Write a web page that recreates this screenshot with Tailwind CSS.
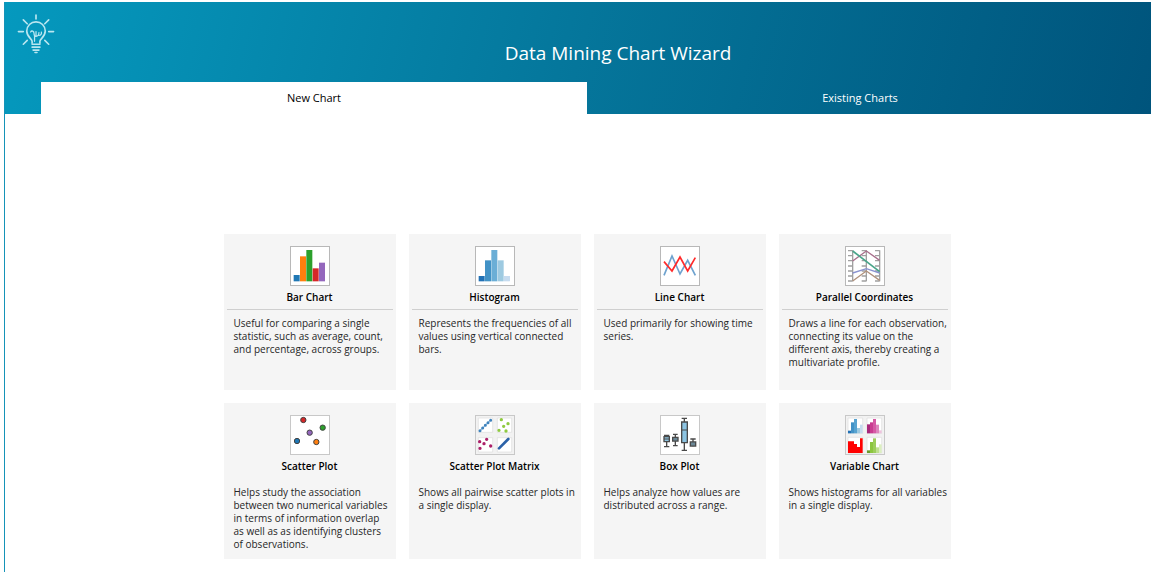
<!DOCTYPE html>
<html lang="en">

<head>
    <meta charset="UTF-8">
    <meta name="viewport" content="width=device-width, initial-scale=1.0">
    <title>Data Mining Chart Wizard</title>
    <script src="https://cdn.jsdelivr.net/npm/@tailwindcss/browser@4"></script>
</head>

<body class="min-h-screen flex flex-col bg-white pt-0.5 pl-1 pb-1 font-['Open_Sans',sans-serif] text-black">
    <div class="flex-1 border-l border-[#1593b8]">
        <header class="relative bg-linear-105 from-[#0599be] via-[#05769b] to-[#00547c]">
            <svg class="absolute left-[11px] top-3 size-10" viewBox="-2 0 38 41" fill="none" stroke="#b9e6f0" stroke-width="1.7" stroke-linecap="round" aria-hidden="true">
                <path d="M17 1v4M4 6l4 4M30 6l-4 4M-1 18h5M30 18h5M4 31l4-4M30 31l-4-4" />
                <path d="M13 30v-2c0-2.500-5.500-4.500-5.500-10.500a9.500 9.500 0 0 1 19 0c0 6-5.500 8-5.500 10.500v2" />
                <path d="M11.500 18.500c1-2 3.500-1 3.500 1.500 0 2 1 3 2 3s3-1 3-4M15.500 28v-5M17 18v4M20 22c2 0 3-2 2.500-3.500" stroke-width="1.300" />
                <path d="M13 31h8M13 34h8M14 37h6M16 39.500h2" />
            </svg>
            <h1 class="h-20 pt-[35px] pl-20 text-center text-[19px] leading-8 text-white">Data Mining Chart Wizard</h1>
            <nav class="grid grid-cols-2 pl-9 pr-[18px] text-[11px]" role="tablist">
                <button type="button" role="tab" aria-selected="true" class="h-8 bg-white text-black">New Chart</button>
                <button type="button" role="tab" aria-selected="false" class="h-8 text-white">Existing Charts</button>
            </nav>
        </header>

        <main class="pt-[120px] pb-3 pl-9 pr-[18px]">
            <div class="mx-auto grid max-w-[727px] grid-cols-4 gap-[13px]">
                <button type="button" class="flex min-h-[156px] flex-col items-stretch justify-start bg-[#f5f5f5] px-[3px] pt-3 text-left text-[10px] leading-[13px]">
                    <svg class="mx-auto size-10 border border-[#b8b8b8] bg-white" viewBox="2 2 114 114" aria-hidden="true">
                        <path fill="#1f77b4" d="M10 86h18v19H10z" />
                        <path fill="#ff7f0e" d="M29 30h18v75H29z" />
                        <path fill="#2ca02c" d="M48 11h18v94H48z" />
                        <path fill="#d62728" d="M67 66h18v39H67z" />
                        <path fill="#9467bd" d="M86 49h18v56H86z" />
                    </svg>
                    <span class="mt-[5px] border-b border-[#cfcfcf] pb-[5px] text-center font-semibold">Bar Chart</span>
                    <span class="pl-[7px] pt-[7px] text-[#262626]">Useful for comparing a single statistic, such as average, count, and percentage, across groups.</span>
                </button>

                <button type="button" class="flex min-h-[156px] flex-col items-stretch justify-start bg-[#f5f5f5] px-[3px] pt-3 text-left text-[10px] leading-[13px]">
                    <svg class="mx-auto size-10 border border-[#b8b8b8] bg-white" viewBox="2 2 114 114" aria-hidden="true">
                        <path fill="#2171b5" d="M10 89h18v16H10z" />
                        <path fill="#4292c6" d="M29 42h18v63H29z" />
                        <path fill="#6baed6" d="M48 11h18v94H48z" />
                        <path fill="#9ecae1" d="M67 42h18v63H67z" />
                        <path fill="#c6dbef" d="M86 89h18v16H86z" />
                    </svg>
                    <span class="mt-[5px] border-b border-[#cfcfcf] pb-[5px] text-center font-semibold">Histogram</span>
                    <span class="pl-[7px] pt-[7px] text-[#262626]">Represents the frequencies of all values using vertical connected bars.</span>
                </button>

                <button type="button" class="flex min-h-[156px] flex-col items-stretch justify-start bg-[#f5f5f5] px-[3px] pt-3 text-left text-[10px] leading-[13px]">
                    <svg class="mx-auto size-10 border border-[#b8b8b8] bg-white" viewBox="2 2 114 114" fill="none" stroke-width="5" aria-hidden="true">
                        <path stroke="#6fa3cf" d="M11 87 35 29l24 54 23-41 23 45" />
                        <path stroke="#ff2a2a" d="M11 46 35 74l24-42 23 42 23-40" />
                    </svg>
                    <span class="mt-[5px] border-b border-[#cfcfcf] pb-[5px] text-center font-semibold">Line Chart</span>
                    <span class="pl-[7px] pt-[7px] text-[#262626]">Used primarily for showing time series.</span>
                </button>

                <button type="button" class="flex min-h-[156px] flex-col items-stretch justify-start bg-[#f5f5f5] px-[3px] pt-3 text-left text-[10px] leading-[13px]">
                    <svg class="mx-auto size-10 border border-[#b8b8b8] bg-white" viewBox="2 2 114 114" fill="none" stroke-width="4" aria-hidden="true">
                        <path stroke="#a0a0a0" stroke-width="4" d="M22 12v93M63 12v93M103 12v93M8 13h14M8 28h14M8 43h14M8 59h14M8 74h14M8 89h14M8 104h14M49 13h14M49 28h14M49 43h14M49 59h14M49 74h14M49 89h14M49 104h14M89 13h14M89 28h14M89 43h14M89 59h14M89 74h14M89 89h14M89 104h14" />
                        <path stroke="#a8708c" d="M22 44 63 14l40 28" />
                        <path stroke="#4aa58a" stroke-width="5" d="m22 14 81 62" />
                        <path stroke="#8a93cf" d="m22 80 41-13 40 13" />
                        <path stroke="#b0917c" d="m22 104 41-30 40 28" />
                    </svg>
                    <span class="mt-[5px] border-b border-[#cfcfcf] pb-[5px] text-center font-semibold">Parallel Coordinates</span>
                    <span class="pl-[7px] pt-[7px] text-[#262626]">Draws a line for each observation, connecting its value on the different axis, thereby creating a multivariate profile.</span>
                </button>

                <button type="button" class="flex min-h-[156px] flex-col items-stretch justify-start bg-[#f5f5f5] px-[3px] pt-3 text-left text-[10px] leading-[13px]">
                    <svg class="mx-auto size-10 border border-[#c8c8c8] bg-white" viewBox="2 2 114 114" stroke="#444" stroke-width="3" aria-hidden="true">
                        <circle cx="39" cy="14" r="8" fill="#d62728" />
                        <circle cx="97" cy="37" r="8" fill="#2ca02c" />
                        <circle cx="58" cy="52" r="8" fill="#9467bd" />
                        <circle cx="20" cy="77" r="8" fill="#1f77b4" />
                        <circle cx="78" cy="80" r="8" fill="#ff7f0e" />
                    </svg>
                    <span class="mt-[5px] border-b border-transparent pb-[5px] text-center font-semibold">Scatter Plot</span>
                    <span class="pl-[7px] pt-[7px] text-[#262626]">Helps study the association between two numerical variables in terms of information overlap<br>as well as as identifying clusters<br>of observations.</span>
                </button>

                <button type="button" class="flex min-h-[156px] flex-col items-stretch justify-start bg-[#f5f5f5] px-[3px] pt-3 text-left text-[10px] leading-[13px]">
                    <svg class="mx-auto size-10 border border-[#c8c8c8] bg-[#f2f2f2]" viewBox="2 2 114 114" aria-hidden="true">
                        <path fill="#fff" stroke="#ddd" stroke-width="2" d="M9 8h43v43H9zM66 8h43v43H66zM9 67h43v43H9zM66 67h43v43H66z" />
                        <path fill="none" stroke="#a5c6e2" stroke-width="4" d="m14 46 31-31" />
                        <path fill="none" stroke="#3f83bd" stroke-width="9" stroke-linecap="round" d="M14 46h0M22 38h0M30 30h0M38 22h0M46 15h0" />
                        <path fill="none" stroke="#8fca3f" stroke-width="10" stroke-linecap="round" d="M78 13h0M98 25h0M85 33h0M71 45h0M92 47h0" />
                        <path fill="none" stroke="#ab1f68" stroke-width="10" stroke-linecap="round" d="M34 72h0M13 79h0M26 85h0M46 92h0M14 99h0" />
                        <path fill="none" stroke="#2b62a8" stroke-width="8" stroke-linecap="round" d="m71 99 28-28" />
                    </svg>
                    <span class="mt-[5px] border-b border-transparent pb-[5px] text-center font-semibold">Scatter Plot Matrix</span>
                    <span class="pl-[7px] pt-[7px] text-[#262626]">Shows all pairwise scatter plots in a single display.</span>
                </button>

                <button type="button" class="flex min-h-[156px] flex-col items-stretch justify-start bg-[#f5f5f5] px-[3px] pt-3 text-left text-[10px] leading-[13px]">
                    <svg class="mx-auto size-10 border border-[#c8c8c8] bg-white" viewBox="2 2 114 114" fill="#8cc4e2" stroke="#4a4a4a" stroke-width="4" aria-hidden="true">
                        <path d="M19 60v34M11 60h16M11 94h16M45 57v34M38 57h14M38 91h14M72 9v96M64 9h16M64 105h16M98 71v22M90 71h16" />
                        <path d="M11 64h16v15H11zM37 66h16v11H37zM64 20h17v62H64zM90 80h16v12H90z" />
                        <path d="M11 71h16M37 71h16M64 44h17M90 86h16" stroke-width="3" />
                    </svg>
                    <span class="mt-[5px] border-b border-transparent pb-[5px] text-center font-semibold">Box Plot</span>
                    <span class="pl-[7px] pt-[7px] text-[#262626]">Helps analyze how values are distributed across a range.</span>
                </button>

                <button type="button" class="flex min-h-[156px] flex-col items-stretch justify-start bg-[#f5f5f5] px-[3px] pt-3 text-left text-[10px] leading-[13px]">
                    <svg class="mx-auto size-10 border border-[#c8c8c8] bg-[#f2f2f2]" viewBox="2 2 114 114" aria-hidden="true">
                        <path fill="#fff" stroke="#ddd" stroke-width="2" d="M8 8h44v46H8zM65 8h44v46H65zM8 66h44v47H8zM65 66h44v47H65z" />
                        <path fill="#2171b5" d="M8 46h9v8H8z" />
                        <path fill="#4292c6" d="M17 21h9v33h-9z" />
                        <path fill="#58a3d0" d="M26 11h9v43h-9z" />
                        <path fill="#9ecae1" d="M35 38h9v16h-9z" />
                        <path fill="#c6dbef" d="M44 28h8v26h-8z" />
                        <path fill="#a9287c" d="M65 27h9v27h-9z" />
                        <path fill="#c93d91" d="M74 21h9v33h-9z" />
                        <path fill="#d65aa5" d="M83 11h9v43h-9z" />
                        <path fill="#dd86bd" d="M92 28h9v26h-9z" />
                        <path fill="#efc3de" d="M101 45h8v9h-8z" />
                        <path fill="#f00" d="M8 78h18v8h9v9h9V69h8v44H8z" />
                        <path fill="#6b9c2e" d="M65 105h9v8h-9z" />
                        <path fill="#8cc63f" d="M74 80h9v33h-9z" />
                        <path fill="#9dce5b" d="M83 69h9v44h-9z" />
                        <path fill="#bfe08f" d="M92 96h9v17h-9z" />
                        <path fill="#dcefc0" d="M101 87h8v26h-8z" />
                    </svg>
                    <span class="mt-[5px] border-b border-transparent pb-[5px] text-center font-semibold">Variable Chart</span>
                    <span class="pl-[7px] pt-[7px] text-[#262626]">Shows histograms for all variables in a single display.</span>
                </button>
            </div>
        </main>
    </div>
</body>

</html>
